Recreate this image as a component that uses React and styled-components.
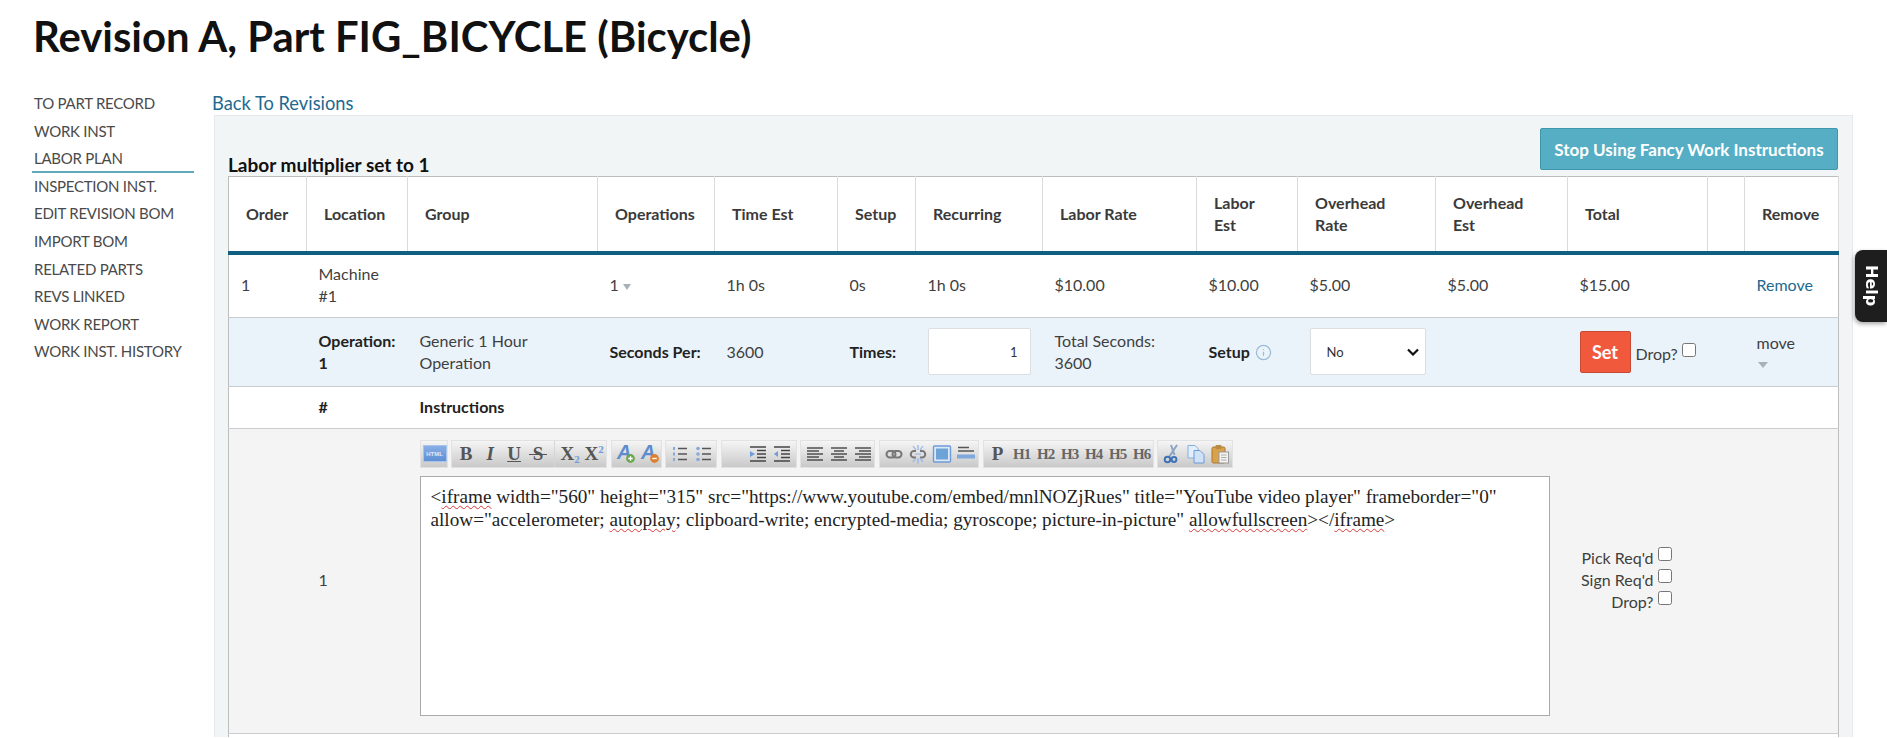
import styled, { createGlobalStyle } from "styled-components";
import { Info } from "lucide-react";

const GlobalStyle = createGlobalStyle`
  html, body {
    margin: 0;
    height: 738px;
    overflow: hidden;
    background: #fff;
  }
  body {
    font-family: "Lato", "Liberation Sans", sans-serif;
    font-size: 16px;
    line-height: 22px;
    color: #333;
  }
`;

const Title = styled.h1`
  margin: 0;
  height: 90px;
  padding: 12px 0 0 33px;
  box-sizing: border-box;
  font-size: 41.8px;
  line-height: 48px;
  font-weight: 700;
  color: #111;
`;

const Layout = styled.div`
  display: flex;
  padding-left: 32px;
`;

const SideNav = styled.nav`
  width: 162px;
  margin-right: 18px;
  flex: none;
`;

const NavItem = styled.a`
  display: block;
  height: 27.6px;
  box-sizing: border-box;
  padding: 2px 0 0 2px;
  font-size: 15px;
  letter-spacing: -0.25px;
  color: #4a4a4a;
  border-bottom: 2px solid ${(p) => (p.$active ? "#5fa9bd" : "transparent")};
`;

const Main = styled.main`
  flex: none;
  width: 1641px;
`;

const BackLink = styled.a`
  display: block;
  height: 25px;
  padding-top: 2px;
  box-sizing: border-box;
  font-size: 18.3px;
  color: #23698f;
`;

const Panel = styled.section`
  margin-left: 2px;
  width: 1639px;
  box-sizing: border-box;
  background: #f2f5f6;
  border: 1px solid #e6eaec;
  border-bottom: 0;
  padding: 12px 14px 0 13px;
`;

const TopBar = styled.div`
  height: 48px;
  display: flex;
  justify-content: space-between;
  align-items: flex-start;
`;

const Multiplier = styled.strong`
  align-self: flex-end;
  font-size: 19px;
  line-height: 22px;
  color: #111;
`;

const FancyButton = styled.button`
  width: 298px;
  height: 42px;
  padding: 0;
  background: #56aec4;
  border: 1px solid #3f97ad;
  border-radius: 2px;
  color: #fff;
  font: 700 17px "Lato", sans-serif;
`;

const Table = styled.table`
  width: 1610px;
  table-layout: fixed;
  border-collapse: collapse;
  background: #fff;
  border: 1px solid #bdbdbd;
  border-bottom: 0;
`;

const HeadCell = styled.th`
  height: 74px;
  padding: 0 0 0 17px;
  text-align: left;
  white-space: pre-line;
  font-size: 16px;
  font-weight: 700;
  color: #3a3a3a;
  border-right: 1px solid #d8dcdf;
  border-bottom: 4px solid #0f6080;
`;

const Row = styled.tr`
  height: ${(p) => p.$h}px;
  background: ${(p) => p.$bg || "#fff"};
  border-bottom: ${(p) => (p.$open ? "0" : "1px solid #c9cdd0")};

  & > td {
    padding-bottom: ${(p) => p.$lift || 0}px;
  }
`;

const Cell = styled.td`
  padding: ${(p) => p.$top ?? 0}px ${(p) => p.$right ?? 8}px 0 12px;
  vertical-align: ${(p) => (p.$top ? "top" : "middle")};
  font-weight: ${(p) => (p.$bold ? 700 : 400)};
  color: ${(p) => (p.$bold ? "#222" : "#3f3f3f")};
`;

const TextLink = styled.a`
  color: #23698f;
`;

const Caret = styled.span`
  display: inline-block;
  width: 0;
  height: 0;
  margin: 0 0 1px 4px;
  border-left: 4px solid transparent;
  border-right: 4px solid transparent;
  border-top: 6px solid #a9b1b8;
`;

const MoveCaret = styled.span`
  display: block;
  width: 0;
  height: 0;
  margin: 8px 0 3px 1px;
  border-left: 5px solid transparent;
  border-right: 5px solid transparent;
  border-top: 6px solid #a9b1b8;
`;

const FieldInput = styled.input`
  width: 103px;
  height: 47px;
  box-sizing: border-box;
  padding: 0 12px;
  text-align: right;
  background: #fff;
  border: 1px solid #dcdfe2;
  border-radius: 2px;
  font: 13px "Lato", sans-serif;
  color: #333;
`;

const FieldSelect = styled.select`
  width: 116px;
  height: 47px;
  box-sizing: border-box;
  padding-left: 16px;
  appearance: none;
  background: #fff
    url("data:image/svg+xml,%3Csvg xmlns='http://www.w3.org/2000/svg' width='12' height='8' fill='none'%3E%3Cpath d='M1 1.5l5 5 5-5' stroke='%23111' stroke-width='2.2'/%3E%3C/svg%3E")
    96px center no-repeat;
  border: 1px solid #dcdfe2;
  border-radius: 2px;
  font: 13px "Lato", sans-serif;
  color: #333;
`;

const InfoMark = styled(Info)`
  margin-left: 5px;
  vertical-align: -3px;
  color: #9dbbd8;
`;

const SetGroup = styled.div`
  display: flex;
  align-items: center;
`;

const SetButton = styled.button`
  width: 51px;
  height: 42px;
  padding: 0;
  margin-right: 5px;
  background: #f1593d;
  border: 1px solid #c84a34;
  border-radius: 2px;
  color: #fff;
  font: 700 18px "Lato", sans-serif;
`;

const DropText = styled.span`
  margin-top: 4px;
`;

const Check = styled.input.attrs({ type: "checkbox" })`
  width: 14px;
  height: 14px;
  margin: 0 0 0 4px;
  vertical-align: 3px;
`;

const DropCheck = styled(Check)`
  margin-bottom: 4px;
`;

const Flags = styled.div`
  width: 92px;
  text-align: right;
`;

const Toolbar = styled.div`
  display: flex;
  gap: 3.6px;
  margin-bottom: 8px;
`;

const ToolGroup = styled.div`
  width: ${(p) => p.$w}px;
  height: 28px;
  box-sizing: border-box;
  display: flex;
  align-items: center;
  justify-content: ${(p) => (p.$end ? "flex-end" : "flex-start")};
  padding: ${(p) => (p.$end ? "0 2px 0 0" : "0 0 0 2px")};
  border: 1px solid #e2e2e2;
  background: linear-gradient(#f5f5f5, #c9c9c9);
`;

const ToolDivider = styled.span`
  width: 1px;
  height: 26px;
  flex: none;
  margin: 0 3px 0 4px;
  background: #d6d6d6;
`;

const ToolButton = styled.span`
  position: relative;
  width: 24px;
  height: 24px;
  flex: none;
  display: flex;
  align-items: center;
  justify-content: center;
  font-family: "Liberation Serif", serif;
  font-weight: 700;
  font-style: ${(p) => (p.$italic ? "italic" : "normal")};
  font-size: ${(p) => p.$size || 19}px;
  letter-spacing: ${(p) => (p.$size ? "-1px" : "0")};
  text-decoration: ${(p) => p.$line || "none"};
  color: ${(p) => p.$color || "#555"};

  ${(p) =>
    p.$strike &&
    `&::after {
      content: "";
      position: absolute;
      left: 3px;
      right: 3px;
      top: 12px;
      height: 1.5px;
      background: #555;
    }`}
`;

const Script = styled.span`
  font-size: 11px;
  color: #6f9bd6;
  position: relative;
  top: ${(p) => (p.$up ? -5 : 5)}px;
`;

const HtmlBadge = styled.span`
  width: 22px;
  height: 15px;
  display: flex;
  align-items: center;
  justify-content: center;
  background: linear-gradient(#88aee6, #5f8fd4);
  border: 1px solid #a9c4ea;
  color: #dfe9f8;
  font: 700 6px "Liberation Sans", sans-serif;
`;

const EditorBox = styled.div`
  width: 1130px;
  height: 240px;
  box-sizing: border-box;
  padding: 8px 8px 8px 10px;
  background: #fff;
  border: 1px solid #a9a9a9;
  font: 19.2px/23px "Liberation Serif", serif;
  color: #222;
`;

const Misspelled = styled.span`
  text-decoration: underline wavy #d8383a 1px;
  text-underline-offset: 2px;
`;

const HelpTab = styled.div`
  position: fixed;
  top: 250px;
  right: 0;
  width: 32px;
  height: 72px;
  display: flex;
  align-items: center;
  justify-content: center;
  writing-mode: vertical-rl;
  background: #1e1e1e;
  border-radius: 8px 0 0 8px;
  box-shadow: -1px 2px 4px rgba(0, 0, 0, 0.35);
  color: #fff;
  font: 700 16px "DejaVu Sans", sans-serif;
`;

const Icon = ({ children }) => (
  <svg width="20" height="20" viewBox="0 0 20 20" fill="none">
    {children}
  </svg>
);

const Lines = ({ rows }) => (
  <Icon>
    {rows.map(([x1, x2, y], i) => (
      <path key={i} d={`M${x1} ${y}H${x2}`} stroke="#444" strokeWidth="1.4" />
    ))}
  </Icon>
);

const FontColor = ({ badge, mark }) => (
  <Icon>
    <text x="1" y="15" fontFamily="Liberation Sans" fontSize="20" fontWeight="700" fontStyle="italic" fill="#5f8ccc">
      A
    </text>
    <circle cx="14.5" cy="14.5" r="4.4" fill={badge} />
    <path d={mark} stroke="#fff" strokeWidth="1.3" />
  </Icon>
);

const NumberList = () => (
  <Icon>
    <path d="M4 3v3M4 8.5v3M4 14v3" stroke="#86a9d8" strokeWidth="2" />
    <path d="M8 4.5h9M8 10h9M8 15.5h9" stroke="#555" strokeWidth="1.4" />
  </Icon>
);

const BulletList = () => (
  <Icon>
    <circle cx="4" cy="4.5" r="1.8" fill="#86a9d8" />
    <circle cx="4" cy="10" r="1.8" fill="#86a9d8" />
    <circle cx="4" cy="15.5" r="1.8" fill="#86a9d8" />
    <path d="M8 4.5h9M8 10h9M8 15.5h9" stroke="#555" strokeWidth="1.4" />
  </Icon>
);

const IndentIcon = ({ flip }) => (
  <Icon>
    <path d="M2 3h16M9 6.5h9M9 10h9M9 13.5h9M2 17h16" stroke="#444" strokeWidth="1.4" />
    <path d={flip ? "M2 10l4-3v6z" : "M7 10l-5-3v6z"} fill="#6f9bd6" />
  </Icon>
);

const LinkIcon = () => (
  <Icon>
    <rect x="2.5" y="7" width="9" height="6.5" rx="3.2" stroke="#777" strokeWidth="2" />
    <rect x="8.5" y="7" width="9" height="6.5" rx="3.2" stroke="#777" strokeWidth="2" />
  </Icon>
);

const UnlinkIcon = () => (
  <Icon>
    <path d="M8 7H6a3.2 3.2 0 000 6.5h2M12 7h2a3.2 3.2 0 010 6.5h-2" stroke="#777" strokeWidth="2" />
    <path d="M7 10h6M10 1v5M10 14.5v5M5 2l3 4M15 2l-3 4M5 18l3-4M15 18l-3-4" stroke="#8fb3e6" strokeWidth="1.2" />
  </Icon>
);

const ImageIcon = () => (
  <Icon>
    <rect x="1.5" y="2" width="17" height="16" rx="1" fill="#dbe8f7" stroke="#6f9bd6" strokeWidth="1.4" />
    <rect x="4" y="4.5" width="12" height="11" fill="#6ea3d8" />
  </Icon>
);

const RuleIcon = () => (
  <Icon>
    <path d="M2 3.5h11M2 7h16" stroke="#555" strokeWidth="1.4" />
    <rect x="1" y="10.5" width="18" height="4" fill="#7fa9dc" />
  </Icon>
);

const CutIcon = () => (
  <Icon>
    <path d="M15 1L7 13M9 1l3.5 10" stroke="#8aa4c4" strokeWidth="2" />
    <circle cx="5.5" cy="15.5" r="2.8" stroke="#3f73b5" strokeWidth="2" />
    <circle cx="12" cy="15.5" r="2.4" stroke="#3f73b5" strokeWidth="2" />
  </Icon>
);

const CopyIcon = () => (
  <Icon>
    <path d="M2 1.5h7l3 3V14H2z" fill="#e4effb" stroke="#86ade0" />
    <path d="M8 6.5h6l4 4v8.5H8z" fill="#cfe2f8" stroke="#6f9bd6" />
  </Icon>
);

const PasteIcon = () => (
  <Icon>
    <rect x="2" y="3" width="13" height="16" rx="1.5" fill="#d9a14a" stroke="#a8772c" />
    <rect x="5.5" y="1" width="6" height="4" rx="1" fill="#b98a44" />
    <rect x="9" y="8" width="9.5" height="11" fill="#f3f3f3" stroke="#999" />
    <path d="M11 11h5.5M11 13.5h5.5M11 16h5.5" stroke="#aaa" />
  </Icon>
);

const navLinks = [
  "TO PART RECORD",
  "WORK INST",
  "LABOR PLAN",
  "INSPECTION INST.",
  "EDIT REVISION BOM",
  "IMPORT BOM",
  "RELATED PARTS",
  "REVS LINKED",
  "WORK REPORT",
  "WORK INST. HISTORY",
];

const columns = [78, 101, 190, 117, 123, 78, 127, 154, 101, 138, 132, 140, 37, 94];

const heads = [
  "Order",
  "Location",
  "Group",
  "Operations",
  "Time Est",
  "Setup",
  "Recurring",
  "Labor Rate",
  "Labor\nEst",
  "Overhead\nRate",
  "Overhead\nEst",
  "Total",
  "",
  "Remove",
];

const leftAlign = [[2, 18, 4], [2, 14, 7], [2, 18, 10], [2, 14, 13], [2, 18, 16]];
const centerAlign = [[2, 18, 4], [5, 15, 7], [2, 18, 10], [5, 15, 13], [2, 18, 16]];
const rightAlign = [[2, 18, 4], [6, 18, 7], [2, 18, 10], [6, 18, 13], [2, 18, 16]];

function EditorToolbar() {
  return (
    <Toolbar>
      <ToolGroup $w={28}>
        <HtmlBadge>HTML</HtmlBadge>
      </ToolGroup>
      <ToolGroup $w={156}>
        <ToolButton>B</ToolButton>
        <ToolButton $italic>I</ToolButton>
        <ToolButton $line="underline">U</ToolButton>
        <ToolButton $strike>S</ToolButton>
        <ToolDivider />
        <ToolButton>
          X<Script>2</Script>
        </ToolButton>
        <ToolButton>
          X<Script $up>2</Script>
        </ToolButton>
      </ToolGroup>
      <ToolGroup $w={51}>
        <ToolButton>
          <FontColor badge="#6aa84f" mark="M12.2 14.5h4.6M14.5 12.2v4.6" />
        </ToolButton>
        <ToolButton>
          <FontColor badge="#e0812f" mark="M12.2 14.5h4.6" />
        </ToolButton>
      </ToolGroup>
      <ToolGroup $w={52}>
        <ToolButton>
          <NumberList />
        </ToolButton>
        <ToolButton>
          <BulletList />
        </ToolButton>
      </ToolGroup>
      <ToolGroup $w={76} $end>
        <ToolButton>
          <IndentIcon />
        </ToolButton>
        <ToolButton>
          <IndentIcon flip />
        </ToolButton>
      </ToolGroup>
      <ToolGroup $w={75}>
        <ToolButton>
          <Lines rows={leftAlign} />
        </ToolButton>
        <ToolButton>
          <Lines rows={centerAlign} />
        </ToolButton>
        <ToolButton>
          <Lines rows={rightAlign} />
        </ToolButton>
      </ToolGroup>
      <ToolGroup $w={100}>
        <ToolButton>
          <LinkIcon />
        </ToolButton>
        <ToolButton>
          <UnlinkIcon />
        </ToolButton>
        <ToolButton>
          <ImageIcon />
        </ToolButton>
        <ToolButton>
          <RuleIcon />
        </ToolButton>
      </ToolGroup>
      <ToolGroup $w={171}>
        <ToolButton>P</ToolButton>
        {["H1", "H2", "H3", "H4", "H5", "H6"].map((h) => (
          <ToolButton key={h} $size={15} $color="#666">
            {h}
          </ToolButton>
        ))}
      </ToolGroup>
      <ToolGroup $w={76}>
        <ToolButton>
          <CutIcon />
        </ToolButton>
        <ToolButton>
          <CopyIcon />
        </ToolButton>
        <ToolButton>
          <PasteIcon />
        </ToolButton>
      </ToolGroup>
    </Toolbar>
  );
}

export default function App() {
  return (
    <>
      <GlobalStyle />
      <Title>Revision A, Part FIG_BICYCLE (Bicycle)</Title>
      <Layout>
        <SideNav>
          {navLinks.map((link) => (
            <NavItem key={link} $active={link === "LABOR PLAN"}>
              {link}
            </NavItem>
          ))}
        </SideNav>
        <Main>
          <BackLink>Back To Revisions</BackLink>
          <Panel>
            <TopBar>
              <Multiplier>Labor multiplier set to 1</Multiplier>
              <FancyButton>Stop Using Fancy Work Instructions</FancyButton>
            </TopBar>
            <Table>
              <colgroup>
                {columns.map((w, i) => (
                  <col key={i} width={w} />
                ))}
              </colgroup>
              <thead>
                <tr>
                  {heads.map((h, i) => (
                    <HeadCell key={i}>{h}</HeadCell>
                  ))}
                </tr>
              </thead>
              <tbody>
                <Row $h={64} $lift={2}>
                  <Cell>1</Cell>
                  <Cell>
                    Machine
                    <br />
                    #1
                  </Cell>
                  <Cell />
                  <Cell>
                    1<Caret />
                  </Cell>
                  <Cell>1h 0s</Cell>
                  <Cell>0s</Cell>
                  <Cell>1h 0s</Cell>
                  <Cell>$10.00</Cell>
                  <Cell>$10.00</Cell>
                  <Cell>$5.00</Cell>
                  <Cell>$5.00</Cell>
                  <Cell>$15.00</Cell>
                  <Cell />
                  <Cell>
                    <TextLink>Remove</TextLink>
                  </Cell>
                </Row>
                <Row $h={69} $bg="#eaf3fa">
                  <Cell />
                  <Cell $bold>
                    Operation:
                    <br />1
                  </Cell>
                  <Cell>Generic 1 Hour Operation</Cell>
                  <Cell $bold>Seconds Per:</Cell>
                  <Cell>3600</Cell>
                  <Cell $bold>Times:</Cell>
                  <Cell>
                    <FieldInput defaultValue="1" />
                  </Cell>
                  <Cell>Total Seconds: 3600</Cell>
                  <Cell $bold>
                    Setup
                    <InfoMark size={17} strokeWidth={1.8} />
                  </Cell>
                  <Cell>
                    <FieldSelect defaultValue="No">
                      <option>No</option>
                      <option>Yes</option>
                    </FieldSelect>
                  </Cell>
                  <Cell />
                  <Cell colSpan={2}>
                    <SetGroup>
                      <SetButton>Set</SetButton>
                      <DropText>Drop?</DropText>
                      <DropCheck />
                    </SetGroup>
                  </Cell>
                  <Cell>
                    move
                    <MoveCaret />
                  </Cell>
                </Row>
                <Row $h={42}>
                  <Cell />
                  <Cell $bold>#</Cell>
                  <Cell $bold colSpan={12}>
                    Instructions
                  </Cell>
                </Row>
                <Row $h={305} $bg="#f4f4f4" $lift={2}>
                  <Cell />
                  <Cell>1</Cell>
                  <Cell colSpan={9} $right={0} $top={11}>
                    <EditorToolbar />
                    <EditorBox>
                      &lt;<Misspelled>iframe</Misspelled> width="560" height="315"
                      src="https://www.youtube.com/embed/mnlNOZjRues" title="YouTube video player"
                      frameborder="0" allow="accelerometer; <Misspelled>autoplay</Misspelled>;
                      clipboard-write; encrypted-media; gyroscope; picture-in-picture"{" "}
                      <Misspelled>allowfullscreen</Misspelled>&gt;&lt;/<Misspelled>iframe</Misspelled>&gt;
                    </EditorBox>
                  </Cell>
                  <Cell>
                    <Flags>
                      Pick Req'd
                      <Check />
                      <br />
                      Sign Req'd
                      <Check />
                      <br />
                      Drop?
                      <Check />
                    </Flags>
                  </Cell>
                  <Cell colSpan={2} />
                </Row>
                <Row $h={4} $open>
                  <Cell colSpan={14} />
                </Row>
              </tbody>
            </Table>
          </Panel>
        </Main>
      </Layout>
      <HelpTab>Help</HelpTab>
    </>
  );
}
